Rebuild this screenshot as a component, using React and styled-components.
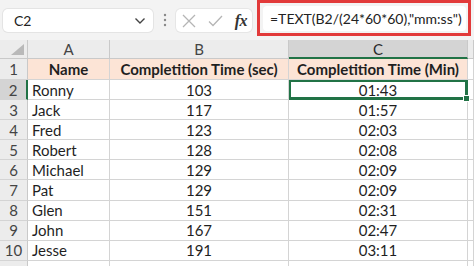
import React from "react";
import styled, { createGlobalStyle } from "styled-components";

const Global = createGlobalStyle`
  html, body { margin: 0; padding: 0; background: #f3f3f3; }
  body { width: 474px; height: 266px; overflow: hidden; font-family: Lato, "Open Sans", sans-serif; }
`;

const Page = styled.div`
  width: 474px;
  height: 266px;
  background: #f3f3f3;
  display: flex;
  flex-direction: column;
  overflow: hidden;
`;

const Toolbar = styled.div`
  height: 40px;
  flex: none;
  display: flex;
  align-items: flex-start;
  box-sizing: border-box;
`;

const NameBox = styled.div`
  margin: 9px 0 0 3px;
  width: 150px;
  height: 23px;
  background: #fff;
  border-radius: 5px;
  box-shadow: 0 0 0 1px #e4e4e4;
  display: flex;
  align-items: center;
  justify-content: space-between;
  padding: 0 7px 0 11px;
  box-sizing: border-box;
  font-size: 14px;
  color: #222;
`;

const Dots = styled.div`
  width: 23px;
  height: 40px;
  display: flex;
  align-items: center;
  justify-content: center;
`;

const IconBox = styled.div`
  margin-top: 9px;
  width: 76px;
  height: 23px;
  background: #fff;
  border-radius: 5px;
  box-shadow: 0 0 0 1px #e6e6e6;
  display: flex;
  align-items: center;
  justify-content: space-between;
  padding: 0 5px 0 6px;
  box-sizing: border-box;
`;

const Fx = styled.span`
  font-family: "Liberation Serif", serif;
  font-style: italic;
  font-weight: bold;
  font-size: 16px;
  color: #333;
  letter-spacing: -0.5px;
`;

const FormulaFrame = styled.div`
  margin-left: 5px;
  width: 214px;
  height: 36px;
  border: 3px solid #e23a3a;
  box-sizing: border-box;
  background: #f3f3f3;
  padding: 3px 2px 2px 3px;
  display: flex;
`;

const FormulaInput = styled.div`
  flex: 1;
  background: #fff;
  border-radius: 4px;
  display: flex;
  align-items: center;
  padding-left: 7px;
  font-size: 14px;
  color: #222;
  white-space: nowrap;
`;

const Grid = styled.div`
  display: grid;
  grid-template-columns: 28px 82px 179px 179px 1fr;
  grid-auto-rows: 20.1px;
  grid-template-rows: 19px 21px;
  background: #fff;
`;

const ColHead = styled.div`
  background: ${(p) => (p.$sel ? "#d4d4d4" : "#ececec")};
  border-right: 1px solid #c9c9c9;
  border-bottom: ${(p) => (p.$sel ? "2px solid #217346" : "1px solid #c9c9c9")};
  box-sizing: border-box;
  display: flex;
  align-items: center;
  justify-content: center;
  font-size: 15px;
  color: ${(p) => (p.$sel ? "#2b2b2b" : "#444")};
`;

const Corner = styled(ColHead)`
  align-items: flex-end;
  justify-content: flex-end;
  padding: 0 3px 3px 0;
`;

const RowHead = styled.div`
  background: ${(p) => (p.$sel ? "#d4d4d4" : "#ececec")};
  border-right: ${(p) => (p.$sel ? "2px solid #217346" : "1px solid #c9c9c9")};
  border-bottom: 1px solid #d4d4d4;
  box-sizing: border-box;
  display: flex;
  align-items: center;
  justify-content: center;
  font-size: 15px;
  color: #444;
`;

const Cell = styled.div`
  background: ${(p) => (p.$head ? "#fce4d6" : "#fff")};
  border-right: 1px solid #d4d4d4;
  border-bottom: 1px solid #d4d4d4;
  box-sizing: border-box;
  display: flex;
  align-items: center;
  justify-content: ${(p) => (p.$left ? "flex-start" : "center")};
  padding-left: ${(p) => (p.$left ? "4px" : "0")};
  font-size: 15px;
  font-weight: ${(p) => (p.$head ? 700 : 400)};
  color: #1f1f1f;
  white-space: nowrap;
  position: relative;
  ${(p) => p.$sel && "box-shadow: inset 0 0 0 2px #217346; border-color: #217346;"}
`;

const Handle = styled.span`
  position: absolute;
  right: -3px;
  bottom: -3px;
  width: 5px;
  height: 5px;
  background: #217346;
  border: 1px solid #fff;
  z-index: 2;
`;

const data = [
  ["Ronny", 103, "01:43"],
  ["Jack", 117, "01:57"],
  ["Fred", 123, "02:03"],
  ["Robert", 128, "02:08"],
  ["Michael", 129, "02:09"],
  ["Pat", 129, "02:09"],
  ["Glen", 151, "02:31"],
  ["John", 167, "02:47"],
  ["Jesse", 191, "03:11"],
  ["", "", ""],
];

export default function App() {
  return (
    <Page>
      <Global />
      <Toolbar>
        <NameBox>
          <span>C2</span>
          <svg width="12" height="8" viewBox="0 0 12 8">
            <path d="M1.5 1.5 L6 6 L10.5 1.5" fill="none" stroke="#444" strokeWidth="1.4" />
          </svg>
        </NameBox>
        <Dots>
          <svg width="4" height="14" viewBox="0 0 4 14">
            <circle cx="2" cy="2" r="1.2" fill="#888" />
            <circle cx="2" cy="7" r="1.2" fill="#888" />
            <circle cx="2" cy="12" r="1.2" fill="#888" />
          </svg>
        </Dots>
        <IconBox>
          <svg width="14" height="14" viewBox="0 0 14 14">
            <path d="M1 1 L13 13 M13 1 L1 13" stroke="#b5b5b5" strokeWidth="1.3" />
          </svg>
          <svg width="15" height="12" viewBox="0 0 15 12">
            <path d="M1 6.5 L5 10.5 L14 1" fill="none" stroke="#b5b5b5" strokeWidth="1.3" />
          </svg>
          <Fx>fx</Fx>
        </IconBox>
        <FormulaFrame>
          <FormulaInput>=TEXT(B2/(24*60*60),"mm:ss")</FormulaInput>
        </FormulaFrame>
      </Toolbar>
      <Grid>
        <Corner>
          <svg width="13" height="11" viewBox="0 0 13 11">
            <path d="M13 0 L13 11 L0 11 Z" fill="#b9b9b9" />
          </svg>
        </Corner>
        <ColHead>A</ColHead>
        <ColHead>B</ColHead>
        <ColHead $sel>C</ColHead>
        <ColHead />

        <RowHead>1</RowHead>
        <Cell $head>Name</Cell>
        <Cell $head>Completition Time (sec)</Cell>
        <Cell $head>Completition Time (Min)</Cell>
        <Cell />

        {data.map(([n, s, m], i) => (
          <React.Fragment key={i}>
            <RowHead $sel={i === 0}>{n ? i + 2 : ""}</RowHead>
            <Cell $left>{n}</Cell>
            <Cell>{s}</Cell>
            <Cell $sel={i === 0}>
              {m}
              {i === 0 && <Handle />}
            </Cell>
            <Cell />
          </React.Fragment>
        ))}
      </Grid>
    </Page>
  );
}
